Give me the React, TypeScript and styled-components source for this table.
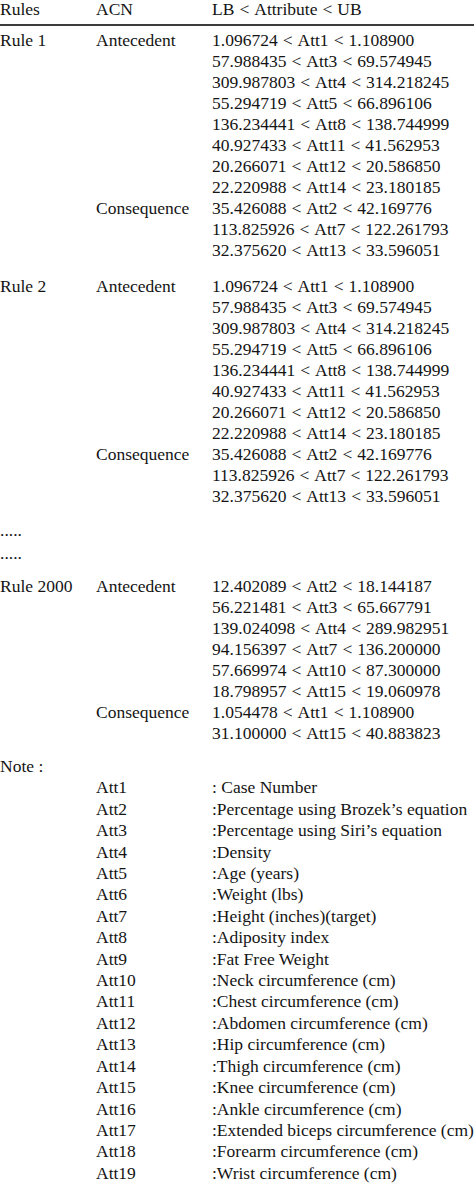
import React from 'react';
import styled, { createGlobalStyle } from 'styled-components';

const GlobalStyle = createGlobalStyle`
  html, body {
    margin: 0;
    padding: 0;
    background: #ffffff;
  }
  body {
    font-family: "Liberation Serif", "Times New Roman", serif;
    color: #141414;
  }
`;

type Condition = [string, string, string];

interface Rule {
  name: string;
  antecedent: Condition[];
  consequence: Condition[];
}

const ruleOneTwoAntecedent: Condition[] = [
  ['1.096724', 'Att1', '1.108900'],
  ['57.988435', 'Att3', '69.574945'],
  ['309.987803', 'Att4', '314.218245'],
  ['55.294719', 'Att5', '66.896106'],
  ['136.234441', 'Att8', '138.744999'],
  ['40.927433', 'Att11', '41.562953'],
  ['20.266071', 'Att12', '20.586850'],
  ['22.220988', 'Att14', '23.180185'],
];

const ruleOneTwoConsequence: Condition[] = [
  ['35.426088', 'Att2', '42.169776'],
  ['113.825926', 'Att7', '122.261793'],
  ['32.375620', 'Att13', '33.596051'],
];

const rules: Rule[] = [
  { name: 'Rule 1', antecedent: ruleOneTwoAntecedent, consequence: ruleOneTwoConsequence },
  { name: 'Rule 2', antecedent: ruleOneTwoAntecedent, consequence: ruleOneTwoConsequence },
];

const lastRule: Rule = {
  name: 'Rule 2000',
  antecedent: [
    ['12.402089', 'Att2', '18.144187'],
    ['56.221481', 'Att3', '65.667791'],
    ['139.024098', 'Att4', '289.982951'],
    ['94.156397', 'Att7', '136.200000'],
    ['57.669974', 'Att10', '87.300000'],
    ['18.798957', 'Att15', '19.060978'],
  ],
  consequence: [
    ['1.054478', 'Att1', '1.108900'],
    ['31.100000', 'Att15', '40.883823'],
  ],
};

const notes: [string, string][] = [
  ['Att1', ': Case Number'],
  ['Att2', ':Percentage using Brozek\u2019s equation'],
  ['Att3', ':Percentage using Siri\u2019s equation'],
  ['Att4', ':Density'],
  ['Att5', ':Age (years)'],
  ['Att6', ':Weight (lbs)'],
  ['Att7', ':Height (inches)(target)'],
  ['Att8', ':Adiposity index'],
  ['Att9', ':Fat Free Weight'],
  ['Att10', ':Neck circumference (cm)'],
  ['Att11', ':Chest circumference (cm)'],
  ['Att12', ':Abdomen circumference (cm)'],
  ['Att13', ':Hip circumference (cm)'],
  ['Att14', ':Thigh circumference (cm)'],
  ['Att15', ':Knee circumference (cm)'],
  ['Att16', ':Ankle circumference (cm)'],
  ['Att17', ':Extended biceps circumference (cm)'],
  ['Att18', ':Forearm circumference (cm)'],
  ['Att19', ':Wrist circumference (cm)'],
];

const Page = styled.div`
  width: 474px;
  overflow: hidden;
  font-size: 17.5px;
  white-space: nowrap;
`;

const HeaderRow = styled.div`
  display: flex;
  line-height: 18px;
  padding-bottom: 6px;
  border-bottom: 2px solid #3c3c3c;
`;

const RuleCell = styled.div`
  width: 96px;
  flex-shrink: 0;
`;

const AcnCell = styled.div`
  width: 116px;
  flex-shrink: 0;
`;

const ValueCell = styled.div`
  flex: 1;
`;

const Rel = styled.span`
  padding: 0 5px;
`;

const RuleBlock = styled.div<{ $gap?: number }>`
  display: flex;
  line-height: 21px;
  margin-top: ${(p) => p.$gap ?? 15}px;
`;

const Groups = styled.div`
  display: flex;
  flex-direction: column;
`;

const Group = styled.div`
  display: flex;
`;

const Lines = styled.div`
  display: flex;
  flex-direction: column;
`;

const Ellipsis = styled.div<{ $gap: number }>`
  line-height: 21px;
  margin-top: ${(p) => p.$gap}px;
`;

const NoteSection = styled.div`
  margin-top: 12px;
  line-height: 21.4px;
`;

const NoteRow = styled.div`
  display: flex;
`;

const ConditionLine: React.FC<{ c: Condition }> = ({ c }) => (
  <div>
    {c[0]}
    <Rel>&lt;</Rel>
    {c[1]}
    <Rel>&lt;</Rel>
    {c[2]}
  </div>
);

const RuleView: React.FC<{ rule: Rule; gap?: number }> = ({ rule, gap }) => (
  <RuleBlock $gap={gap}>
    <RuleCell>{rule.name}</RuleCell>
    <Groups>
      <Group>
        <AcnCell>Antecedent</AcnCell>
        <Lines>
          {rule.antecedent.map((c, i) => (
            <ConditionLine key={i} c={c} />
          ))}
        </Lines>
      </Group>
      <Group>
        <AcnCell>Consequence</AcnCell>
        <Lines>
          {rule.consequence.map((c, i) => (
            <ConditionLine key={i} c={c} />
          ))}
        </Lines>
      </Group>
    </Groups>
  </RuleBlock>
);

export default function App() {
  return (
    <>
      <GlobalStyle />
      <Page>
        <HeaderRow>
          <RuleCell>Rules</RuleCell>
          <AcnCell>ACN</AcnCell>
          <ValueCell>
            LB<Rel>&lt;</Rel>Attribute<Rel>&lt;</Rel>UB
          </ValueCell>
        </HeaderRow>
        {rules.map((r, i) => (
          <RuleView key={r.name} rule={r} gap={i === 0 ? 4 : 15} />
        ))}
        <Ellipsis $gap={13}>.....</Ellipsis>
        <Ellipsis $gap={2}>.....</Ellipsis>
        <RuleView rule={lastRule} gap={12} />
        <NoteSection>
          <div>Note :</div>
          {notes.map(([att, desc]) => (
            <NoteRow key={att}>
              <RuleCell />
              <AcnCell>{att}</AcnCell>
              <ValueCell>{desc}</ValueCell>
            </NoteRow>
          ))}
        </NoteSection>
      </Page>
    </>
  );
}
